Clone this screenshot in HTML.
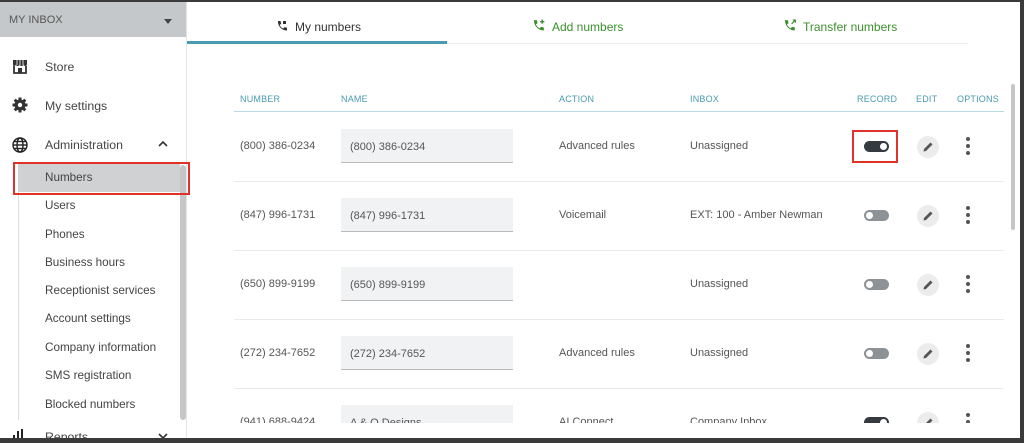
<!DOCTYPE html>
<html><head><style>
*{box-sizing:border-box;margin:0;padding:0}
body{width:1024px;height:443px;overflow:hidden;background:#3a3a3a;font-family:"Liberation Sans",sans-serif;color:#555;position:relative}
.frame{position:absolute;left:0;top:2px;width:1020px;height:436px;background:#fff;overflow:hidden}
.side{position:absolute;left:0;top:0;width:187px;height:436px;border-right:1px solid #e4e4e4;background:#fff}
.hdr{height:35px;background:#c5c8ca;font-size:11px;color:#555;padding:12px 0 0 9px}
.hdr .caret{position:absolute;left:164px;top:17px;border-left:4px solid transparent;border-right:4px solid transparent;border-top:5px solid #444}
.nav{position:absolute;left:45px;font-size:12.3px;color:#444}
.ico{position:absolute;left:12px}
.sub{position:absolute;left:45px;font-size:11.7px;color:#444}
.t{position:absolute;font-size:11px;white-space:nowrap}
.th{position:absolute;top:92px;font-size:9px;color:#4a9bb0;letter-spacing:.2px}
.inp{position:absolute;left:341px;width:172px;height:34px;background:#f1f2f3;border-bottom:1px solid #bbb;font-size:11px;padding:12px 0 0 9px}
.div{position:absolute;left:234px;width:770px;height:1px;background:#eaeaea}
.tog{position:absolute;left:864px;width:25px;height:11px;border-radius:6px;background:#8c9296}
.tog::after{content:"";position:absolute;left:2px;top:2px;width:7px;height:7px;border-radius:50%;background:#fff}
.tog.on{background:#343a40}.tog.on::after{left:16px}
.ed{position:absolute;left:917px;width:22px;height:22px;border-radius:50%;background:#ececec}
.ed svg{position:absolute;left:5px;top:5px}
.dots{position:absolute;left:966px;width:4px}
.dots i{display:block;width:4px;height:4px;border-radius:50%;background:#555;margin-bottom:3px}
</style></head><body>
<div class="frame">
 <div class="side">
  <div class="hdr">MY INBOX<div class="caret"></div></div>
  <svg class="ico" style="top:57px" width="16" height="15" viewBox="0 0 16 15"><path d="M1 1H15V5.5C15 6.5 14 7 13.2 7C12.4 7 11.6 6.5 11.4 5.6C11.1 6.5 10.3 7 9.4 7C8.5 7 7.8 6.5 7.6 5.6C7.3 6.5 6.6 7 5.7 7C4.8 7 4.1 6.5 3.8 5.6C3.6 6.5 2.8 7 2 7C1.4 7 1 6.5 1 5.5Z" fill="#333"/><path d="M2 7V14H14V7" fill="none" stroke="#333" stroke-width="1.8"/><rect x="6" y="9" width="4" height="5" fill="#333"/><path d="M5 1V6M8 1V6M11 1V6" stroke="#fff" stroke-width=".8"/></svg>
  <div class="nav" style="top:58px">Store</div>
  <svg class="ico" style="top:95px" width="16" height="16" viewBox="0 0 16 16"><circle cx="8" cy="8" r="5.5" fill="#333"/><g stroke="#333" stroke-width="3"><line x1="8" y1="0.5" x2="8" y2="15.5"/><line x1="0.5" y1="8" x2="15.5" y2="8"/><line x1="2.7" y1="2.7" x2="13.3" y2="13.3"/><line x1="13.3" y1="2.7" x2="2.7" y2="13.3"/></g><circle cx="8" cy="8" r="2.2" fill="#fff"/></svg>
  <div class="nav" style="top:97px">My settings</div>
  <svg class="ico" style="top:135px" width="16" height="16" viewBox="0 0 16 16" fill="none" stroke="#222" stroke-width="1.4"><circle cx="8" cy="8" r="7"/><ellipse cx="8" cy="8" rx="3" ry="7"/><line x1="1" y1="8" x2="15" y2="8"/><line x1="2" y1="4.5" x2="14" y2="4.5"/><line x1="2" y1="11.5" x2="14" y2="11.5"/></svg>
  <div class="nav" style="top:136px">Administration</div>
  <svg style="position:absolute;left:158px;top:138px" width="10" height="7" viewBox="0 0 10 7"><path d="M1 6L5 2L9 6" fill="none" stroke="#333" stroke-width="1.6"/></svg>
  <div style="position:absolute;left:18px;top:162px;width:1px;height:256px;background:#ddd"></div>
  <div style="position:absolute;left:18px;top:161px;width:162px;height:29px;background:#cfd1d2"></div>
  <div style="position:absolute;left:180px;top:163px;width:6px;height:255px;border-radius:3px;background:#c4c6c7"></div>
  <div style="position:absolute;left:13px;top:160px;width:177px;height:33px;border:2px solid #e0322a"></div>
  <div class="sub" style="top:169px">Numbers</div>
  <div class="sub" style="top:197px">Users</div>
  <div class="sub" style="top:226px">Phones</div>
  <div class="sub" style="top:254px">Business hours</div>
  <div class="sub" style="top:282px">Receptionist services</div>
  <div class="sub" style="top:310px">Account settings</div>
  <div class="sub" style="top:339px">Company information</div>
  <div class="sub" style="top:367px">SMS registration</div>
  <div class="sub" style="top:396px">Blocked numbers</div>
  <svg class="ico" style="top:427px" width="14" height="10" viewBox="0 0 14 10"><g fill="#222"><rect x="1" y="6" width="2" height="4"/><rect x="5" y="2" width="2" height="8"/><rect x="9" y="0" width="2" height="10"/></g></svg>
  <div class="nav" style="top:428px">Reports</div>
  <svg style="position:absolute;left:158px;top:431px" width="10" height="7" viewBox="0 0 10 7"><path d="M1 1L5 5L9 1" fill="none" stroke="#333" stroke-width="1.6"/></svg>
 </div>
 <div style="position:absolute;left:447px;top:41px;width:521px;height:1px;background:#ececec"></div>
 <div style="position:absolute;left:187px;top:39px;width:260px;height:3px;background:#4a9bb0"></div>
 <svg style="position:absolute;left:276px;top:18px" width="12" height="12" viewBox="0 0 12 12"><path d="M2 1L4.5 1L5.2 3.8L3.7 5C4.5 6.8 5.6 7.9 7.2 8.6L8.4 7.1L11 7.8L11 10.5C6 10.5 1.6 6.2 2 1Z" fill="#333"/><rect x="7" y="1" width="3" height="3" fill="#333"/></svg>
 <div class="t" style="left:295px;top:18px;font-size:12px;color:#333">My numbers</div>
 <svg style="position:absolute;left:533px;top:17px" width="13" height="13" viewBox="0 0 12 12"><path d="M1 1L3.5 1L4.2 3.8L2.7 5C3.5 6.8 4.6 7.9 6.2 8.6L7.4 7.1L10 7.8L10 10.5C5 10.5 .6 6.2 1 1Z" fill="#3b8f2e"/><path d="M8.5 0.5V4.5M6.5 2.5H10.5" stroke="#3b8f2e" stroke-width="1.2"/></svg>
 <div class="t" style="left:552px;top:18px;font-size:12px;color:#3b8f2e">Add numbers</div>
 <svg style="position:absolute;left:784px;top:17px" width="13" height="13" viewBox="0 0 12 12"><path d="M1 1L3.5 1L4.2 3.8L2.7 5C3.5 6.8 4.6 7.9 6.2 8.6L7.4 7.1L10 7.8L10 10.5C5 10.5 .6 6.2 1 1Z" fill="#3b8f2e"/><path d="M7 4.5L10.5 1M8 1H10.5V3.5" stroke="#3b8f2e" stroke-width="1.1" fill="none"/></svg>
 <div class="t" style="left:803px;top:18px;font-size:12px;color:#3b8f2e">Transfer numbers</div>
 <div class="th" style="left:240px">NUMBER</div>
 <div class="th" style="left:341px">NAME</div>
 <div class="th" style="left:559px">ACTION</div>
 <div class="th" style="left:690px">INBOX</div>
 <div class="th" style="left:857px">RECORD</div>
 <div class="th" style="left:916px">EDIT</div>
 <div class="th" style="left:957px">OPTIONS</div>
 <div style="position:absolute;left:234px;top:109px;width:770px;height:1px;background:#b8dbe3"></div>
 <div style="position:absolute;left:1011px;top:82px;width:4px;height:146px;border-radius:2px;background:#c4c6c7"></div>
 <div style="position:absolute;left:187px;top:421px;width:833px;height:15px;background:#fff;z-index:5"></div>

 <div class="t" style="left:240px;top:138px">(800) 386-0234</div>
 <div class="inp" style="top:127px">(800) 386-0234</div>
 <div class="t" style="left:559px;top:138px">Advanced rules</div>
 <div class="t" style="left:690px;top:138px">Unassigned</div>
 <div class="tog on" style="top:139px"></div>
 <div style="position:absolute;left:852px;top:128px;width:46px;height:33px;border:2px solid #e0322a"></div>
 <div class="ed" style="top:134px"><svg width="12" height="12" viewBox="0 0 12 12"><path d="M1.5 10.5L2 8L8.5 1.5L10.5 3.5L4 10Z" fill="#555"/></svg></div>
 <div class="dots" style="top:135px"><i></i><i></i><i></i></div>
 <div class="div" style="top:179px"></div>

 <div class="t" style="left:240px;top:207px">(847) 996-1731</div>
 <div class="inp" style="top:196px">(847) 996-1731</div>
 <div class="t" style="left:559px;top:207px">Voicemail</div>
 <div class="t" style="left:690px;top:207px">EXT: 100 - Amber Newman</div>
 <div class="tog" style="top:208px"></div>
 <div class="ed" style="top:203px"><svg width="12" height="12" viewBox="0 0 12 12"><path d="M1.5 10.5L2 8L8.5 1.5L10.5 3.5L4 10Z" fill="#555"/></svg></div>
 <div class="dots" style="top:204px"><i></i><i></i><i></i></div>
 <div class="div" style="top:248px"></div>

 <div class="t" style="left:240px;top:276px">(650) 899-9199</div>
 <div class="inp" style="top:265px">(650) 899-9199</div>
 <div class="t" style="left:690px;top:276px">Unassigned</div>
 <div class="tog" style="top:277px"></div>
 <div class="ed" style="top:272px"><svg width="12" height="12" viewBox="0 0 12 12"><path d="M1.5 10.5L2 8L8.5 1.5L10.5 3.5L4 10Z" fill="#555"/></svg></div>
 <div class="dots" style="top:273px"><i></i><i></i><i></i></div>
 <div class="div" style="top:317px"></div>

 <div class="t" style="left:240px;top:345px">(272) 234-7652</div>
 <div class="inp" style="top:334px">(272) 234-7652</div>
 <div class="t" style="left:559px;top:345px">Advanced rules</div>
 <div class="t" style="left:690px;top:345px">Unassigned</div>
 <div class="tog" style="top:346px"></div>
 <div class="ed" style="top:341px"><svg width="12" height="12" viewBox="0 0 12 12"><path d="M1.5 10.5L2 8L8.5 1.5L10.5 3.5L4 10Z" fill="#555"/></svg></div>
 <div class="dots" style="top:342px"><i></i><i></i><i></i></div>
 <div class="div" style="top:386px"></div>

 <div class="t" style="left:240px;top:414px">(941) 688-9424</div>
 <div class="inp" style="top:403px">A &amp; O Designs</div>
 <div class="t" style="left:559px;top:414px">AI Connect</div>
 <div class="t" style="left:690px;top:414px">Company Inbox</div>
 <div class="tog on" style="top:415px"></div>
 <div class="ed" style="top:410px"><svg width="12" height="12" viewBox="0 0 12 12"><path d="M1.5 10.5L2 8L8.5 1.5L10.5 3.5L4 10Z" fill="#555"/></svg></div>
 <div class="dots" style="top:411px"><i></i><i></i><i></i></div>
</div>
</body></html>
